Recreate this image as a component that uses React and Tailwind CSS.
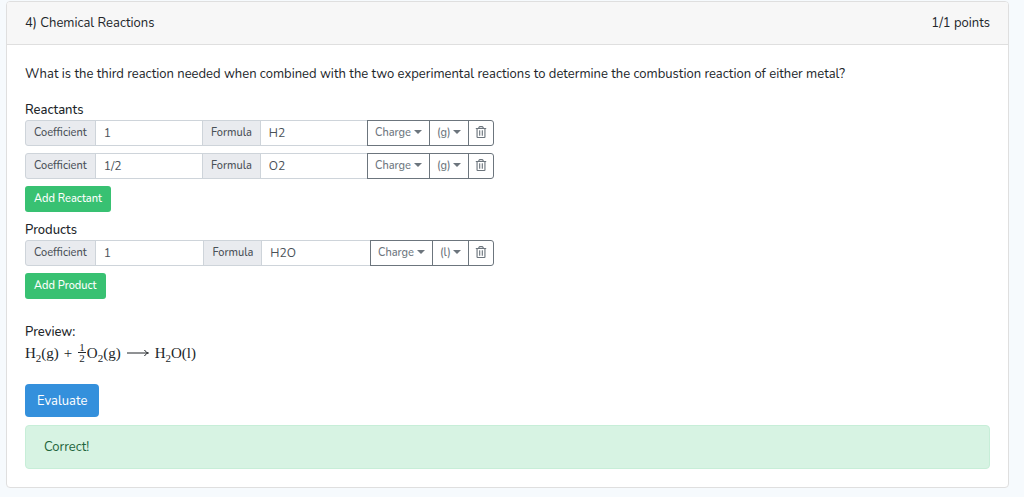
import React, { useState } from "react";
import { FaRegTrashAlt } from "react-icons/fa";

const Addon = ({ htmlFor, children }) => (
  <label
    htmlFor={htmlFor}
    className="flex shrink-0 items-center border border-[#ced4da] bg-[#e9ebef] px-2 text-[11px] font-medium text-[#495057] first:rounded-l-[3px] not-first:-ml-px"
  >
    {children}
  </label>
);

const TextBox = (props) => (
  <input
    type="text"
    className="-ml-px w-0 min-w-0 grow border border-[#ced4da] bg-white px-2 text-[12px] text-[#495057]"
    {...props}
  />
);

const Caret = () => (
  <span className="pointer-events-none mr-[7px] mb-0.5 -ml-[15px] border-x-4 border-t-4 border-x-transparent border-t-[#6c757d]" />
);

const Dropdown = ({ label, options, className, ...rest }) => (
  <div className={`-ml-px flex shrink-0 items-center border border-[#6c757d] ${className}`}>
    <select
      aria-label={label}
      className="h-full w-full appearance-none bg-transparent pl-[7px] text-[11px] font-medium text-[#6c757d]"
      {...rest}
    >
      {options.map((option) => (
        <option key={option}>{option}</option>
      ))}
    </select>
    <Caret />
  </div>
);

const TermRow = ({ id, term, onChange, onRemove }) => {
  const update = (field) => (e) => onChange({ ...term, [field]: e.target.value });

  return (
    <div className="mb-[7px] flex h-[26px] w-full max-w-[469px]">
      <Addon htmlFor={`${id}-coefficient`}>Coefficient</Addon>
      <TextBox
        id={`${id}-coefficient`}
        value={term.coefficient}
        onChange={update("coefficient")}
      />
      <Addon htmlFor={`${id}-formula`}>Formula</Addon>
      <TextBox
        id={`${id}-formula`}
        value={term.formula}
        onChange={update("formula")}
      />
      <Dropdown
        label="Charge"
        className="w-[63px]"
        options={["Charge", "1+", "2+", "3+", "1-", "2-", "3-"]}
        value={term.charge}
        onChange={update("charge")}
      />
      <Dropdown
        label="State"
        className={term.state === "(l)" ? "w-[37px]" : "w-[40px]"}
        options={["(s)", "(l)", "(g)", "(aq)"]}
        value={term.state}
        onChange={update("state")}
      />
      <button
        type="button"
        aria-label="Remove"
        onClick={onRemove}
        className="-ml-px flex w-[26px] shrink-0 items-center justify-center rounded-r-[3px] border border-[#6c757d] pb-0.5 text-[#6c757d]"
      >
        <FaRegTrashAlt className="size-3" />
      </button>
    </div>
  );
};

const TermList = ({ title, name, terms, setTerms, addLabel }) => (
  <section>
    <h2 className="leading-5 font-medium">{title}</h2>
    {terms.map((term, i) => (
      <TermRow
        key={i}
        id={`${name}-${i}`}
        term={term}
        onChange={(next) => setTerms(terms.map((t, j) => (j === i ? next : t)))}
        onRemove={() => setTerms(terms.filter((_, j) => j !== i))}
      />
    ))}
    <button
      type="button"
      onClick={() =>
        setTerms([...terms, { coefficient: "", formula: "", charge: "Charge", state: "(s)" }])
      }
      className="h-[26px] rounded-[3px] bg-[#38c172] px-[9px] text-[11px] font-medium text-white"
    >
      {addLabel}
    </button>
  </section>
);

const Sub = ({ children }) => (
  <sub className="bottom-[-4px] text-[11px]">{children}</sub>
);

// Typeset version of the reaction
const Preview = () => (
  <div className="flex h-[21px] items-center font-['Liberation_Serif',serif] text-[15px] leading-5">
    <span>H<Sub>2</Sub>(g)</span>
    <span className="mr-[6px] ml-[5px]">+</span>
    <span className="mr-px flex flex-col items-center text-[11px] leading-[10px]">
      <span className="border-b border-[#212529] px-px">1</span>
      <span>2</span>
    </span>
    <span>O<Sub>2</Sub>(g)</span>
    <svg viewBox="0 0 22 8" className="mx-[6px] h-2 w-[22px]" fill="none" stroke="currentColor">
      <path d="M0 4H21M17.5 1C18.5 2.8 19.8 3.6 21.5 4C19.8 4.4 18.5 5.2 17.5 7" />
    </svg>
    <span>H<Sub>2</Sub>O(l)</span>
  </div>
);

const App = () => {
  const [reactants, setReactants] = useState([
    { coefficient: "1", formula: "H2", charge: "Charge", state: "(g)" },
    { coefficient: "1/2", formula: "O2", charge: "Charge", state: "(g)" },
  ]);
  const [products, setProducts] = useState([
    { coefficient: "1", formula: "H2O", charge: "Charge", state: "(l)" },
  ]);

  return (
    <div className="min-h-screen bg-[#f6fafd] pt-px pr-[15px] pb-2 pl-[6px] font-[Nunito,'Open_Sans',sans-serif] text-[13px] text-[#212529]">
      <main className="rounded-[4px] border border-[#dfdfdf] bg-white">
        <header className="flex items-center justify-between rounded-t-[3px] border-b border-[#dfdfdf] bg-[#f7f7f7] px-[18px] py-[11px] leading-5">
          <h1>4) Chemical Reactions</h1>
          <span>1/1 points</span>
        </header>

        <div className="px-[18px] pt-[19px] pb-[18px]">
          <p className="mb-4 leading-5">
            What is the third reaction needed when combined with the two
            experimental reactions to determine the combustion reaction of
            either metal?
          </p>

          <div className="flex flex-col gap-2">
            <TermList
              title="Reactants"
              name="reactant"
              terms={reactants}
              setTerms={setReactants}
              addLabel="Add Reactant"
            />
            <TermList
              title="Products"
              name="product"
              terms={products}
              setTerms={setProducts}
              addLabel="Add Product"
            />
          </div>

          <h2 className="mt-[23px] leading-5 font-medium">Preview:</h2>
          <Preview />

          <button
            type="button"
            className="mt-[21px] block rounded-[4px] bg-[#3490dc] px-3 pt-[7px] pb-[6px] leading-5 text-white"
          >
            Evaluate
          </button>

          <div
            role="alert"
            className="mt-2 rounded-[4px] border border-[#c7eed8] bg-[#d7f3e3] px-[18px] py-[11px] leading-5 text-[#1d643b]"
          >
            Correct!
          </div>
        </div>
      </main>
    </div>
  );
};

export default App;
